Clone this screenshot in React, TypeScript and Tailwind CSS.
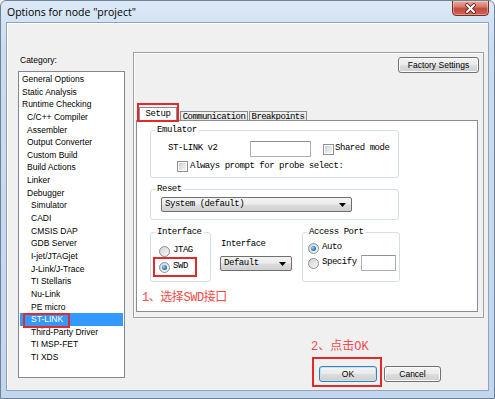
import React from 'react';

// category tree: [label, indent level]
const CATEGORIES: [string, number][] = [
    ["General Options", 0],
    ["Static Analysis", 0],
    ["Runtime Checking", 0],
    ["C/C++ Compiler", 1],
    ["Assembler", 1],
    ["Output Converter", 1],
    ["Custom Build", 1],
    ["Build Actions", 1],
    ["Linker", 1],
    ["Debugger", 1],
    ["Simulator", 2],
    ["CADI", 2],
    ["CMSIS DAP", 2],
    ["GDB Server", 2],
    ["I-jet/JTAGjet", 2],
    ["J-Link/J-Trace", 2],
    ["TI Stellaris", 2],
    ["Nu-Link", 2],
    ["PE micro", 2],
    ["ST-LINK", 2],
    ["Third-Party Driver", 2],
    ["TI MSP-FET", 2],
    ["TI XDS", 2],
];

const SELECTED = "ST-LINK";

const WinButton: React.FC<{ label: string; className?: string; isDefault?: boolean }> = ({ label, className = '', isDefault }) => (
    <div
        className={`flex items-center justify-center rounded-[3px] border text-[8.5px] text-black font-['Liberation_Sans',sans-serif] bg-[linear-gradient(180deg,#f3f3f3_0%,#ebebeb_48%,#dddddd_52%,#cfcfcf_100%)] ${isDefault ? 'border-[#3c7fb1] shadow-[inset_0_0_0_1px_#bfe3f6]' : 'border-[#707070] shadow-[inset_0_0_0_1px_#fbfbfb]'} ${className}`}
    >
        {label}
    </div>
);

const CheckBox: React.FC = () => (
    <div className="w-[11px] h-[11px] border border-[#8e8f8f] bg-white p-[1px] shrink-0">
        <div className="w-full h-full bg-[linear-gradient(135deg,#cbcfd5_0%,#f6f6f6_100%)]"></div>
    </div>
);

const Radio: React.FC<{ checked?: boolean }> = ({ checked }) => (
    <div className="w-[11px] h-[11px] rounded-full border border-[#8e8f8f] bg-[linear-gradient(135deg,#d0d3d8_0%,#f8f8f8_100%)] flex items-center justify-center shrink-0">
        {checked && <div className="w-[5px] h-[5px] rounded-full bg-[radial-gradient(circle_at_35%_35%,#8fd3ff_0%,#2a7fc8_55%,#15508c_100%)]"></div>}
    </div>
);

const TextBox: React.FC<{ className?: string }> = ({ className = '' }) => (
    <div className={`bg-white border border-[#abadb3] border-t-[#8e9096] rounded-[1px] ${className}`}></div>
);

const Combo: React.FC<{ value: string; className?: string }> = ({ value, className = '' }) => (
    <div className={`flex items-center justify-between pl-[3px] pr-[5px] rounded-[2px] border border-[#707070] bg-[linear-gradient(180deg,#f3f3f3_0%,#ebebeb_48%,#dddddd_52%,#cfcfcf_100%)] ${className}`}>
        <span>{value}</span>
        <svg width="7" height="4" viewBox="0 0 7 4"><path d="M0 0 H7 L3.5 4 Z" fill="#000" /></svg>
    </div>
);

const Group: React.FC<{ title: string; className?: string; children?: React.ReactNode }> = ({ title, className = '', children }) => (
    <div className={`relative border border-[#d5dfe5] rounded-[3px] ${className}`}>
        <span className="absolute -top-[7px] left-[4px] bg-white px-[2px] leading-[12px]">{title}</span>
        {children}
    </div>
);

export default function App() {
    const mono = "font-['Liberation_Mono',monospace] text-[9px] tracking-[-0.45px] text-black";
    const redNote = "font-['Liberation_Mono','Noto_Sans_CJK_SC',monospace] text-[12px] leading-[13px] text-[#f24b4b]";
    const tabOff = "h-[11px] -mb-[1px] bg-[linear-gradient(180deg,#f2f2f2_0%,#e3e3e3_100%)] border border-[#898c95] flex items-center justify-center leading-[10px] tracking-[-0.6px]";

    return (
        <div className="w-[495px] h-[399px] flex flex-col border border-[#6f8296] rounded-t-[6px] bg-[linear-gradient(180deg,#dce9f7_0%,#c9dcf1_12%,#c2d6ee_100%)] font-['Liberation_Sans',sans-serif] overflow-hidden">
            {/* title bar */}
            <div className="h-[21px] flex justify-between shrink-0">
                <span className="pl-[6px] pt-[4px] text-[10.5px] leading-[14px] text-black font-['Open_Sans','Liberation_Sans',sans-serif]">Options for node "project"</span>
                <div className="mr-[5px] w-[37px] h-[16px] -mt-[1px] rounded-b-[4px] border border-[#7a2e28] bg-[linear-gradient(180deg,#e9ab9c_0%,#d77a6c_40%,#c44a3e_55%,#d06656_100%)] shadow-[inset_0_0_0_1px_rgba(255,255,255,0.35)] flex items-center justify-center">
                    <svg width="13" height="11" viewBox="0 0 13 11">
                        <path d="M3 2 L10 9 M10 2 L3 9" stroke="#5b1f1a" strokeWidth="3.6" strokeLinecap="round" />
                        <path d="M3 2 L10 9 M10 2 L3 9" stroke="#fff" strokeWidth="2" strokeLinecap="round" />
                    </svg>
                </div>
            </div>

            {/* client area */}
            <div className="mx-[5px] mb-[7px] flex-1 flex items-start bg-[#f0f0f0] border border-[#8fa3ba] shadow-[inset_1px_1px_0_#ffffff]">
                {/* category column */}
                <div className="ml-[11px] mt-[31px] w-[107px] flex flex-col text-[8.5px] text-black">
                    <div className="h-[13px] leading-[13px] pl-[2px] mb-[4px]">Category:</div>
                    <div className="h-[307px] bg-white border border-[#828790] pt-[1px] px-[1px]">
                        {CATEGORIES.map(([name, level]) => {
                            const sel = name === SELECTED;
                            return (
                                <div
                                    key={name}
                                    className={`h-[12.65px] leading-[12.65px] ${level === 0 ? 'pl-[2px]' : level === 1 ? 'pl-[7px]' : 'pl-[11px]'} ${sel ? 'bg-[#3399ff] text-white' : ''}`}
                                >
                                    {sel ? (
                                        <span className="relative">
                                            {name}
                                            <span className="absolute -left-[8px] -top-[1px] w-[47px] h-[15px] border-2 border-[#e22a2a]"></span>
                                        </span>
                                    ) : name}
                                </div>
                            );
                        })}
                    </div>
                </div>

                {/* settings column */}
                <div className="ml-[8px] mt-[29px] flex flex-col">
                    <div className="w-[351px] h-[266px] border border-[#a0a0a0] shadow-[inset_1px_1px_0_#ffffff] flex flex-col">
                        <div className="flex justify-end pr-[4px] pt-[4px]">
                            <WinButton label="Factory Settings" className="w-[81px] h-[16px]" />
                        </div>

                        {/* tabs */}
                        <div className={`mt-[34px] pl-[5px] h-[14px] flex items-end ${mono}`}>
                            <div className="relative z-10 w-[38px] h-[14px] bg-white border border-b-0 border-[#898c95] flex items-start justify-center pt-[1px] leading-[11px]">
                                Setup
                                <span className="absolute -left-[3px] -top-[5px] w-[42px] h-[19px] border-2 border-[#e22a2a]"></span>
                            </div>
                            <div className={`ml-[3px] w-[68px] ${tabOff}`}>Communication</div>
                            <div className={`ml-[1px] w-[58px] ${tabOff}`}>Breakpoints</div>
                        </div>

                        {/* tab page */}
                        <div className={`ml-[2px] w-[342px] h-[192px] -mt-[1px] bg-white border border-[#898c95] flex flex-col ${mono}`}>
                            <Group title="Emulator" className="ml-[13px] mt-[9px] w-[249px] h-[48px]">
                                <div className="mt-[10px] pl-[17px] h-[16px] flex items-center">
                                    <span className="w-[82px]">ST-LINK v2</span>
                                    <TextBox className="w-[61px] h-[16px]" />
                                    <div className="ml-[12px]"><CheckBox /></div>
                                    <span className="ml-[1px]">Shared mode</span>
                                </div>
                                <div className="mt-[4px] pl-[26px] h-[11px] flex items-center">
                                    <CheckBox />
                                    <span className="ml-[2px]">Always prompt for probe select:</span>
                                </div>
                            </Group>

                            <Group title="Reset" className="ml-[13px] mt-[11px] w-[249px] h-[31px]">
                                <div className="pl-[10px] pt-[7px]">
                                    <Combo value="System (default)" className="w-[191px] h-[15px]" />
                                </div>
                            </Group>

                            <div className="ml-[13px] mt-[12px] flex items-start">
                                <Group title="Interface" className="w-[61px] h-[50px]">
                                    <div className="pl-[8px] pt-[12px] flex flex-col gap-[4px]">
                                        <div className="h-[12px] flex items-center gap-[3px]">
                                            <Radio />
                                            <span>JTAG</span>
                                        </div>
                                        <div className="relative h-[12px] flex items-center gap-[3px]">
                                            <Radio checked />
                                            <span>SWD</span>
                                            <span className="absolute -left-[6px] -top-[4px] w-[44px] h-[20px] border-2 border-[#e22a2a]"></span>
                                        </div>
                                    </div>
                                </Group>
                                <div className="ml-[9px] mt-[6px] flex flex-col">
                                    <span className="h-[12px] leading-[12px] pl-[1px]">Interface</span>
                                    <Combo value="Default" className="mt-[6px] w-[72px] h-[15px]" />
                                </div>
                                <Group title="Access Port" className="ml-[10px] w-[98px] h-[50px]">
                                    <div className="pl-[5px] pt-[9px] flex flex-col">
                                        <div className="h-[12px] flex items-center gap-[3px]">
                                            <Radio checked />
                                            <span>Auto</span>
                                        </div>
                                        <div className="mt-[1px] h-[16px] flex items-center gap-[3px]">
                                            <Radio />
                                            <span>Specify</span>
                                            <TextBox className="ml-[1px] w-[35px] h-[16px]" />
                                        </div>
                                    </div>
                                </Group>
                            </div>

                            <div className={`ml-[5px] mt-[10px] ${redNote}`}>1、选择SWD接口</div>
                        </div>
                    </div>

                    {/* bottom: annotation + dialog buttons */}
                    <div className={`ml-[178px] mt-[23px] ${redNote}`}>2、点击OK</div>
                    <div className="ml-[186px] mt-[12px] flex">
                        <div className="relative">
                            <WinButton label="OK" isDefault className="w-[58px] h-[16px]" />
                            <span className="absolute -left-[7px] -top-[9px] w-[70px] h-[30px] border-2 border-[#e22a2a]"></span>
                        </div>
                        <WinButton label="Cancel" className="ml-[7px] w-[57px] h-[16px]" />
                    </div>
                </div>
            </div>
        </div>
    );
}
